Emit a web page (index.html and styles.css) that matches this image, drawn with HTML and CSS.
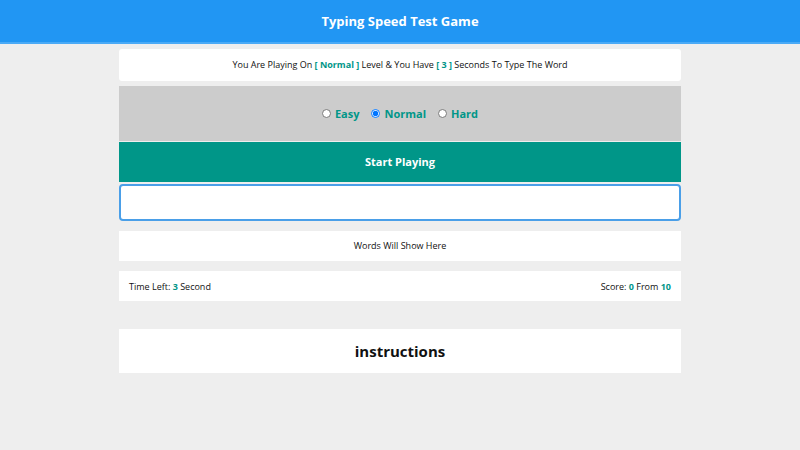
FILE: index.html
```html
<!DOCTYPE html>
<html lang="en">
<head>
  <meta charset="UTF-8" />
  <title>Typing Speed Test Game</title>
  <link rel="stylesheet" href="styles.css">
</head>
<body>

  <div class="name">Typing Speed Test Game</div>

  <div class="game">
    <div class="message">
      You Are Playing On <span class="lvl">[ Normal ]</span> Level &amp; You Have <span class="seconds">[ 3 ]</span> Seconds To Type The Word
    </div>

    <div class="levels">
      <label><input type="radio" name="level" value="easy" /> Easy</label>
      <label><input type="radio" name="level" value="normal" checked /> Normal</label>
      <label><input type="radio" name="level" value="hard" /> Hard</label>
    </div>

    <div class="start">Start Playing</div>

    <input type="text" class="input" />

    <div class="the-word">Words Will Show Here</div>

    <div class="control">
      <div class="time">Time Left: <span>3</span> Second</div>
      <div class="score">Score: <span class="got">0</span> From <span class="total">10</span></div>
    </div>

    <div class="instructions">
      <h2>instructions</h2>
    </div>
  </div>

</body>
</html>
```

FILE: styles.css
```css
body {
  margin: 0;
  background-color: #eeeeee;
  font-family: "Open Sans", "DejaVu Sans", sans-serif;
  color: #111;
}
.name {
  background-color: #2196f3;
  color: #fff;
  text-align: center;
  font-weight: bold;
  font-size: 13px;
  height: 42px;
  line-height: 42px;
  border-bottom: 2px solid #4aaaf6;
}
.game {
  width: 562px;
  margin: 5px auto 0;
}
.message {
  background-color: #fff;
  border-radius: 3px;
  height: 32px;
  line-height: 32px;
  text-align: center;
  font-size: 9px;
}
.message span {
  color: #009688;
  font-weight: bold;
}
.levels {
  background-color: #cccccc;
  margin-top: 5px;
  height: 55px;
  display: flex;
  justify-content: center;
  align-items: center;
  gap: 12px;
}
.levels label {
  color: #009688;
  font-weight: bold;
  font-size: 11px;
  display: flex;
  align-items: center;
  gap: 4px;
}
.levels input {
  margin: 0;
  width: 9px;
  height: 9px;
}
.start {
  background-color: #009688;
  color: #fff;
  text-align: center;
  font-weight: bold;
  font-size: 11px;
  height: 40px;
  line-height: 40px;
  margin-top: 1px;
}
.input {
  display: block;
  box-sizing: border-box;
  width: 100%;
  height: 37px;
  margin-top: 2px;
  border: 2px solid #4a9fe8;
  border-radius: 4px;
  outline: none;
}
.the-word {
  background-color: #fff;
  margin-top: 10px;
  height: 30px;
  line-height: 30px;
  text-align: center;
  font-size: 9px;
}
.control {
  background-color: #fff;
  margin-top: 10px;
  height: 30px;
  padding: 0 10px;
  display: flex;
  justify-content: space-between;
  align-items: center;
  font-size: 9px;
}
.control span {
  color: #009688;
  font-weight: bold;
}
.instructions {
  background-color: #fff;
  margin-top: 28px;
  height: 44px;
  display: flex;
  justify-content: center;
  align-items: center;
}
.instructions h2 {
  margin: 0;
  font-size: 15px;
  font-weight: bold;
}
```
